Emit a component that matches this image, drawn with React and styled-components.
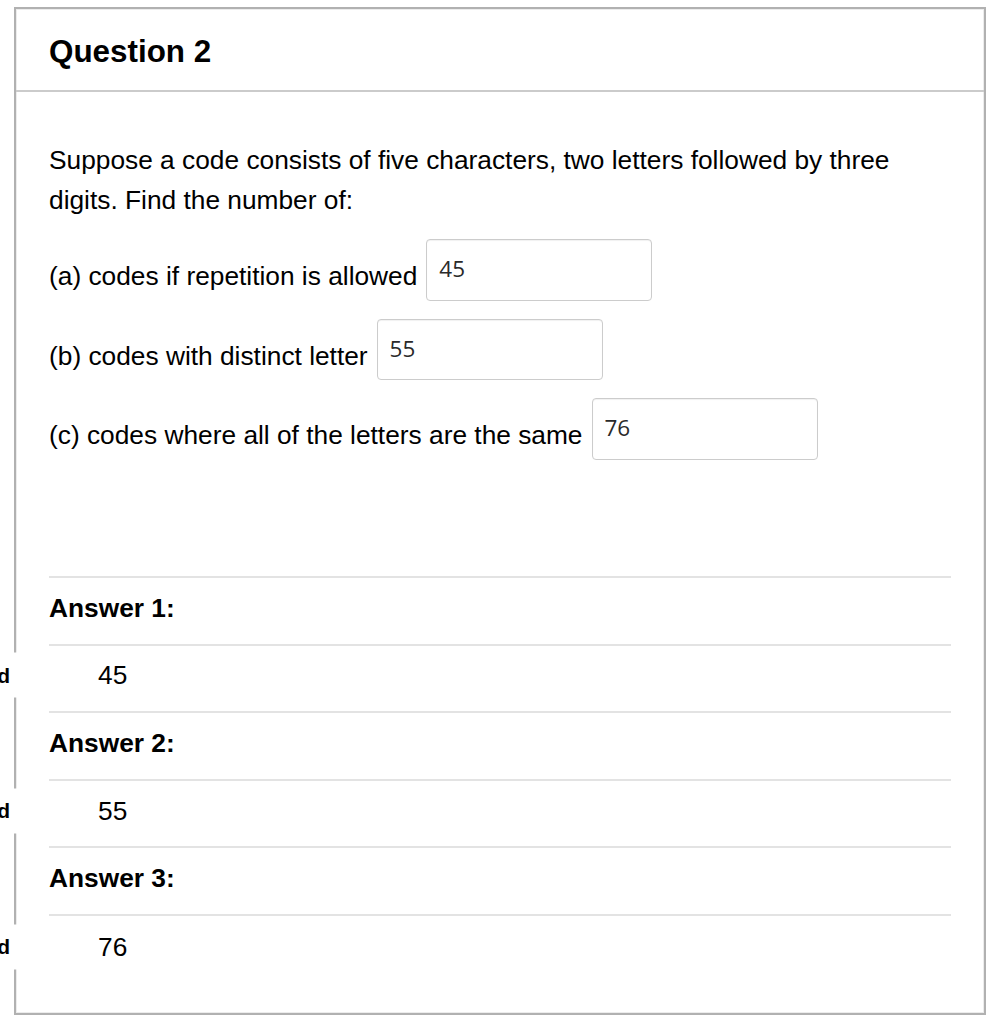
import React from "react";
import styled, { createGlobalStyle } from "styled-components";

const GlobalStyle = createGlobalStyle`
  html, body {
    margin: 0;
    padding: 0;
    background: #ffffff;
  }
  body {
    font-family: "Liberation Sans", Arial, Helvetica, sans-serif;
    color: #000;
  }
  * { box-sizing: border-box; }
`;

const Frame = styled.section`
  position: relative;
  margin: 7px 0 0 14px;
  width: 972px;
  height: 1008px;
  border: 2px solid #b1b1b1;
  box-shadow: inset 0 0 0 1px #ececec;
  background: #fff;
`;

const Header = styled.header`
  padding: 25px 33px 20px;
  border-bottom: 2px solid #cbcbcb;
`;

const Title = styled.h2`
  margin: 0;
  font-size: 31.4px;
  line-height: 36px;
  font-weight: 700;
`;

const Body = styled.div`
  padding: 48px 33px 0;
`;

const Prompt = styled.p`
  margin: 0;
  font-size: 26.3px;
  line-height: 40px;
`;

const Parts = styled.div`
  margin-top: 19px;
  display: flex;
  flex-direction: column;
  gap: 18px;
`;

const Part = styled.div`
  display: flex;
  align-items: flex-start;
  gap: 9px;
`;

const PartLabel = styled.label`
  padding-top: 17px;
  font-size: 26.3px;
  line-height: 40px;
  white-space: nowrap;
`;

const AnswerInput = styled.input`
  width: 226px;
  height: 61.5px;
  border: 1px solid #cccccc;
  border-radius: 4px;
  box-shadow: inset 0 1px 1px rgba(0, 0, 0, 0.06);
  padding: 0 12px 2px;
  font-family: "Open Sans", "Noto Sans", sans-serif;
  font-size: 22.5px;
  color: #2a2a2a;
  background: #fff;
  outline: none;
`;

const Results = styled.div`
  margin-top: 116.5px;
  border-top: 2px solid #e3e3e3;
`;

const ResultRow = styled.div`
  position: relative;
  display: flex;
  align-items: center;
  height: 67.6px;
  padding: 0 0 5px ${(p) => (p.$value ? "49px" : "0")};
  border-bottom: ${(p) => (p.$last ? "none" : "2px solid #e3e3e3")};
  font-size: 26.3px;
  font-weight: ${(p) => (p.$value ? 400 : 700)};
`;

const SideTag = styled.div`
  position: absolute;
  right: calc(100% + 29px);
  top: 50%;
  transform: translateY(-50%);
  width: 60px;
  height: 45px;
  margin-top: -3px;
  padding-right: 10px;
  display: flex;
  align-items: center;
  justify-content: flex-end;
  overflow: hidden;
  background: #fff;
  font-size: 21px;
  font-weight: 700;
  white-space: nowrap;
`;

const parts = [
  { id: "a", label: "(a) codes if repetition is allowed", value: "45" },
  { id: "b", label: "(b) codes with distinct letter", value: "55" },
  { id: "c", label: "(c) codes where all of the letters are the same", value: "76" },
];

export default function App() {
  return (
    <>
      <GlobalStyle />
      <Frame>
        <Header>
          <Title>Question 2</Title>
        </Header>
        <Body>
          <Prompt>
            Suppose a code consists of five characters, two letters followed by three
            digits. Find the number of:
          </Prompt>
          <Parts>
            {parts.map((p) => (
              <Part key={p.id}>
                <PartLabel htmlFor={`part-${p.id}`}>{p.label}</PartLabel>
                <AnswerInput id={`part-${p.id}`} defaultValue={p.value} />
              </Part>
            ))}
          </Parts>
          <Results>
            {parts.map((p, i) => (
              <React.Fragment key={p.id}>
                <ResultRow>Answer {i + 1}:</ResultRow>
                <ResultRow $value $last={i === parts.length - 1}>
                  <SideTag>Graded</SideTag>
                  {p.value}
                </ResultRow>
              </React.Fragment>
            ))}
          </Results>
        </Body>
      </Frame>
    </>
  );
}
